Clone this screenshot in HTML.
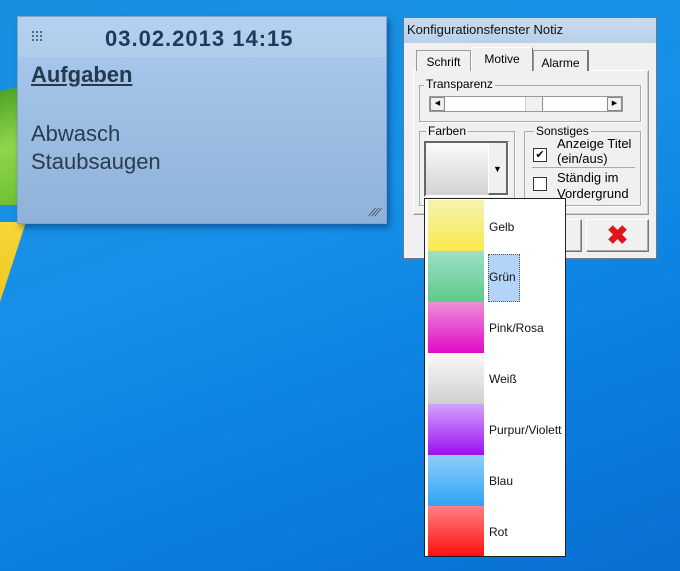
<!DOCTYPE html>
<html><head><meta charset="utf-8"><style>
*{margin:0;padding:0;box-sizing:border-box}
body{width:680px;height:571px;overflow:hidden;position:relative;font-family:"Liberation Sans",sans-serif;
background:linear-gradient(160deg,#1a8fe0 0%,#1690e8 40%,#0b7fe0 70%,#0a6fd0 100%)}
.abs{position:absolute}
.dlg{left:403px;top:17px;width:254px;height:242px;background:#f0f0f0;border:1px solid #6a7a8a}
.title{left:0;top:0;width:252px;height:25px;background:linear-gradient(#c9dcef,#b8d0ea);font-size:13px;color:#111;padding:4px 0 0 3px}
.tab{font-size:12px;color:#000;border:1px solid #999;border-bottom:none;background:#f0f0f0;text-align:center}
.grp{border:1px solid #aaa;box-shadow:1px 1px 0 #fff}
.lbl{font-size:12px;background:#f0f0f0;padding:0 2px}
.sw{left:3px;width:56px;height:51px}
.it{left:64px;font-size:12px;color:#111;white-space:nowrap}
</style></head><body>
<div class="abs" style="left:0;top:85px;width:30px;height:120px;background:linear-gradient(160deg,#4a9e22,#8fd64a 50%,#6bbf30);clip-path:polygon(0 5%,100% 0,100% 100%,0 100%)"></div>
<div class="abs" style="left:0;top:222px;width:26px;height:80px;background:linear-gradient(#f6d53a,#f0c820);clip-path:polygon(0 0,100% 0,0 100%)"></div>
<div class="abs" style="left:17px;top:16px;width:370px;height:208px;background:linear-gradient(#abcbee,#8fb2d8);border:1px solid #7fa4cc;box-shadow:3px 4px 6px rgba(0,40,90,.45)">
 <div class="abs" style="left:0;top:0;width:368px;height:40px;background:rgba(255,255,255,.12)"></div>
 <div class="abs" style="left:13px;top:13px;width:12px;height:12px;background-image:radial-gradient(#47617f 1px,transparent 1.2px);background-size:4px 4px"></div>
 <div class="abs" style="left:87px;top:9px;font-size:22px;letter-spacing:1px;font-weight:bold;color:#1e3a5a;white-space:nowrap">03.02.2013 14:15</div>
 <div class="abs" style="left:13px;top:45px;font-size:22px;font-weight:bold;color:#24384e;text-decoration:underline">Aufgaben</div>
 <div class="abs" style="left:13px;top:103px;font-size:22px;color:#2a3b50;line-height:28px">Abwasch<br>Staubsaugen</div>
 <div class="abs" style="left:352px;top:190px;font-size:11px;color:#334;transform:skewX(-30deg)">///</div>
</div>
<div class="abs dlg">
 <div class="abs title">Konfigurationsfenster Notiz</div>
 <div class="abs" style="left:9px;top:52px;width:236px;height:145px;border:1px solid #999;border-top-color:#fff;border-left-color:#fff;box-shadow:inset -1px -1px 0 #ccc"></div>
 <div class="abs tab" style="left:12px;top:32px;width:55px;height:21px;padding-top:4px">Schrift</div>
 <div class="abs tab" style="left:67px;top:29px;width:62px;height:24px;padding-top:4px;border-color:#fff #777 transparent #fff">Motive</div>
 <div class="abs tab" style="left:129px;top:32px;width:56px;height:21px;padding-top:5px;border-right:2px solid #777">Alarme</div>
 <div class="abs grp" style="left:15px;top:67px;width:222px;height:37px"></div>
 <div class="abs lbl" style="left:20px;top:59px">Transparenz</div>
 <div class="abs" style="left:25px;top:78px;width:194px;height:16px;background:#fff;border:1px solid #999"></div>
 <div class="abs" style="left:26px;top:79px;width:15px;height:14px;background:#f0f0f0;border:1px solid #888;font-size:7px;text-align:center;line-height:12px">◀</div>
 <div class="abs" style="left:121px;top:79px;width:18px;height:14px;background:#f0f0f0;border-right:1px solid #888;border-left:1px solid #ccc"></div>
 <div class="abs" style="left:203px;top:79px;width:15px;height:14px;background:#f0f0f0;border:1px solid #888;font-size:7px;text-align:center;line-height:12px">▶</div>
 <div class="abs grp" style="left:15px;top:113px;width:96px;height:75px"></div>
 <div class="abs lbl" style="left:22px;top:106px">Farben</div>
 <div class="abs" style="left:20px;top:123px;width:85px;height:56px;border:2px solid #666;border-right-color:#fff;border-bottom-color:#fff;background:linear-gradient(#fbfbfb,#d2d2d2)"></div>
 <div class="abs" style="left:84px;top:125px;width:20px;height:52px;background:#f0f0f0;border-right:2px solid #666;border-bottom:2px solid #666;border-left:1px solid #fff;font-size:9px;text-align:center;line-height:52px">▼</div>
 <div class="abs grp" style="left:120px;top:113px;width:117px;height:75px"></div>
 <div class="abs lbl" style="left:130px;top:106px">Sonstiges</div>
 <div class="abs" style="left:153px;top:121px;width:82px;height:27px;overflow:hidden;font-size:13px;line-height:15px"><div style="margin-top:-3px">Anzeige Titel<br>(ein/aus)</div></div>
 <div class="abs" style="left:129px;top:130px;width:14px;height:14px;background:#fff;border:1px solid #333;font-size:11px;line-height:12px;text-align:center">✔</div>
 <div class="abs" style="left:128px;top:149px;width:103px;height:1px;background:#aaa"></div>
 <div class="abs" style="left:153px;top:152px;font-size:13px;line-height:16px">Ständig im<br>Vordergrund</div>
 <div class="abs" style="left:129px;top:159px;width:14px;height:14px;background:#fff;border:1px solid #333"></div>
 <div class="abs" style="left:120px;top:201px;width:58px;height:33px;border:1px solid #777;border-top-color:#fff;border-left-color:#fff;box-shadow:inset -1px -1px 0 #aaa"></div>
 <div class="abs" style="left:182px;top:201px;width:63px;height:33px;border:1px solid #777;border-top-color:#fff;border-left-color:#fff;box-shadow:inset -1px -1px 0 #aaa;text-align:center;line-height:31px;font-size:26px;font-weight:bold;color:#e0151a">✖</div>
</div>
<div class="abs" style="left:424px;top:198px;width:142px;height:359px;background:#fff;border:1px solid #222;overflow:hidden">
 <div class="abs sw" style="top:1px;background:linear-gradient(#f6f3b0,#f9e94d)"></div>
 <div class="abs sw" style="top:52px;background:linear-gradient(#9ee0c6,#5ec98a)"></div>
 <div class="abs sw" style="top:103px;background:linear-gradient(#ec8fd8,#e308c8)"></div>
 <div class="abs sw" style="top:154px;background:linear-gradient(#fafafa,#cfcfcf)"></div>
 <div class="abs sw" style="top:205px;background:linear-gradient(#d3a3fa,#9a10f2)"></div>
 <div class="abs sw" style="top:256px;background:linear-gradient(#8ecdfa,#2fa4f5)"></div>
 <div class="abs sw" style="top:307px;height:50px;background:linear-gradient(#ff8080,#ff1010)"></div>
 <div class="abs it" style="top:21px">Gelb</div>
 <div class="abs" style="left:63px;top:55px;width:32px;height:48px;background:#b3d3f8;border:1px dotted #555"></div>
 <div class="abs it" style="top:71px">Grün</div>
 <div class="abs it" style="top:122px">Pink/Rosa</div>
 <div class="abs it" style="top:173px">Weiß</div>
 <div class="abs it" style="top:224px">Purpur/Violett</div>
 <div class="abs it" style="top:275px">Blau</div>
 <div class="abs it" style="top:326px">Rot</div>
</div>
</body></html>
